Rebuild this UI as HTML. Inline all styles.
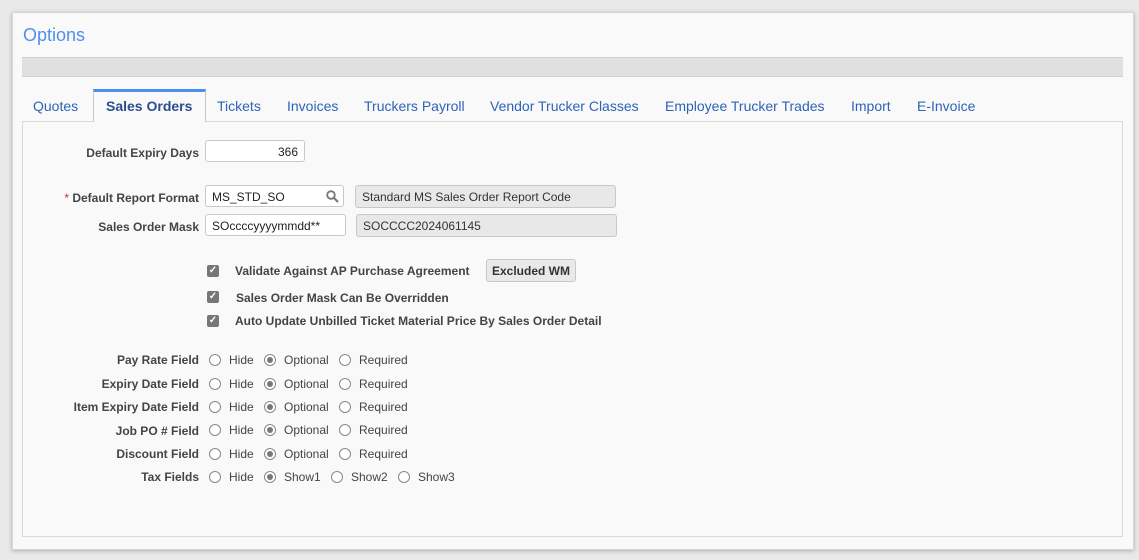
<!DOCTYPE html>
<html><head><style>
body{margin:0;width:1139px;height:560px;background:#e9e9e9;font-family:"Liberation Sans",sans-serif;position:relative;overflow:hidden}
.a{position:absolute;white-space:nowrap}
#panel{left:12px;top:12px;width:1120px;height:536px;background:#f9f9f9;border:1px solid #d6d6d6;box-shadow:0 1px 4px rgba(0,0,0,.25)}
.lbl{font-size:12px;font-weight:bold;color:#444;text-align:right;width:199px;left:0}
.tab{font-size:14px;color:#2e63b8;top:98px}
.inp{background:#fff;border:1px solid #c8c8c8;border-radius:3px;height:22px;font-size:12px;color:#222;line-height:22px;padding:0 6px;box-sizing:border-box}
.ro{background:#e8e8e8;border:1px solid #c8c8c8;border-radius:3px;height:23px;font-size:12px;color:#333;line-height:22px;padding:0 6px;box-sizing:border-box}
.cb{width:12px;height:12px;background:#777;border-radius:2px;color:#fff;font-size:10px;line-height:12px;text-align:center;font-weight:bold}
.ct{font-size:12px;font-weight:bold;color:#444}
.r{width:12px;height:12px;border:1px solid #888;border-radius:50%;box-sizing:border-box;background:#fff}
.r.on::after{content:"";position:absolute;left:2px;top:2px;width:6px;height:6px;border-radius:50%;background:#777}
.rt{font-size:12px;color:#444}
</style></head><body>
<div class="a" id="panel"></div>
<div class="a" style="left:23px;top:25px;font-size:18px;color:#4f8ff0">Options</div>
<div class="a" style="left:22px;top:57px;width:1101px;height:20px;background:#e0e0e0;border-top:1px solid #cfcfcf;border-bottom:1px solid #cfcfcf;box-sizing:border-box"></div>
<div class="a" style="left:22px;top:121px;width:1101px;height:416px;border:1px solid #d9d9d9;box-sizing:border-box;background:#f9f9f9"></div>
<div class="a" style="left:93px;top:89px;width:113px;height:33px;border:1px solid #c8c8c8;border-top:3px solid #4a8ef0;border-bottom:none;background:#f9f9f9;box-sizing:border-box"></div>
<div class="a tab" style="left:33px">Quotes</div>
<div class="a tab" style="left:106px;font-weight:bold;color:#2a4f8c">Sales Orders</div>
<div class="a tab" style="left:217px">Tickets</div>
<div class="a tab" style="left:287px">Invoices</div>
<div class="a tab" style="left:364px">Truckers Payroll</div>
<div class="a tab" style="left:490px">Vendor Trucker Classes</div>
<div class="a tab" style="left:665px">Employee Trucker Trades</div>
<div class="a tab" style="left:851px">Import</div>
<div class="a tab" style="left:917px">E-Invoice</div>

<div class="a lbl" style="top:146px">Default Expiry Days</div>
<div class="a inp" style="left:205px;top:140px;width:100px;text-align:right">366</div>
<div class="a lbl" style="top:191px"><span style="color:#c33;font-weight:normal">*</span> Default Report Format</div>
<div class="a inp" style="left:205px;top:185px;width:139px">MS_STD_SO<svg class="a" style="right:4px;top:4px" width="13" height="13" viewBox="0 0 13 13"><circle cx="5" cy="5" r="3.8" fill="none" stroke="#777" stroke-width="1.8"/><path d="M8 8l4 4" stroke="#777" stroke-width="2.2"/></svg></div>
<div class="a ro" style="left:355px;top:185px;width:261px">Standard MS Sales Order Report Code</div>
<div class="a lbl" style="top:220px">Sales Order Mask</div>
<div class="a inp" style="left:205px;top:214px;width:141px">SOccccyyyymmdd**</div>
<div class="a ro" style="left:356px;top:214px;width:261px">SOCCCC2024061145</div>

<div class="a cb" style="left:207px;top:265px">✓</div><div class="a ct" style="left:235px;top:264px">Validate Against AP Purchase Agreement</div>
<div class="a ro" style="left:486px;top:259px;width:90px;padding:0;font-weight:bold;color:#333;background:#e9e9e9;text-align:center">Excluded WM</div>
<div class="a cb" style="left:207px;top:291px">✓</div><div class="a ct" style="left:236px;top:291px">Sales Order Mask Can Be Overridden</div>
<div class="a cb" style="left:207px;top:315px">✓</div><div class="a ct" style="left:235px;top:314px">Auto Update Unbilled Ticket Material Price By Sales Order Detail</div>

<div class="a lbl" style="top:353px">Pay Rate Field</div>
<div class="a lbl" style="top:377px">Expiry Date Field</div>
<div class="a lbl" style="top:400px">Item Expiry Date Field</div>
<div class="a lbl" style="top:424px">Job PO # Field</div>
<div class="a lbl" style="top:447px">Discount Field</div>
<div class="a lbl" style="top:470px">Tax Fields</div>

<div class="a" style="left:209px;top:354px">
<div class="a r" style="left:0;top:0"></div><div class="a rt" style="left:20px;top:-1px">Hide</div>
<div class="a r on" style="left:55px;top:0"></div><div class="a rt" style="left:75px;top:-1px">Optional</div>
<div class="a r" style="left:130px;top:0"></div><div class="a rt" style="left:150px;top:-1px">Required</div>
</div>
<div class="a" style="left:209px;top:378px">
<div class="a r" style="left:0;top:0"></div><div class="a rt" style="left:20px;top:-1px">Hide</div>
<div class="a r on" style="left:55px;top:0"></div><div class="a rt" style="left:75px;top:-1px">Optional</div>
<div class="a r" style="left:130px;top:0"></div><div class="a rt" style="left:150px;top:-1px">Required</div>
</div>
<div class="a" style="left:209px;top:401px">
<div class="a r" style="left:0;top:0"></div><div class="a rt" style="left:20px;top:-1px">Hide</div>
<div class="a r on" style="left:55px;top:0"></div><div class="a rt" style="left:75px;top:-1px">Optional</div>
<div class="a r" style="left:130px;top:0"></div><div class="a rt" style="left:150px;top:-1px">Required</div>
</div>
<div class="a" style="left:209px;top:424px">
<div class="a r" style="left:0;top:0"></div><div class="a rt" style="left:20px;top:-1px">Hide</div>
<div class="a r on" style="left:55px;top:0"></div><div class="a rt" style="left:75px;top:-1px">Optional</div>
<div class="a r" style="left:130px;top:0"></div><div class="a rt" style="left:150px;top:-1px">Required</div>
</div>
<div class="a" style="left:209px;top:448px">
<div class="a r" style="left:0;top:0"></div><div class="a rt" style="left:20px;top:-1px">Hide</div>
<div class="a r on" style="left:55px;top:0"></div><div class="a rt" style="left:75px;top:-1px">Optional</div>
<div class="a r" style="left:130px;top:0"></div><div class="a rt" style="left:150px;top:-1px">Required</div>
</div>
<div class="a" style="left:209px;top:471px">
<div class="a r" style="left:0;top:0"></div><div class="a rt" style="left:20px;top:-1px">Hide</div>
<div class="a r on" style="left:55px;top:0"></div><div class="a rt" style="left:75px;top:-1px">Show1</div>
<div class="a r" style="left:122px;top:0"></div><div class="a rt" style="left:142px;top:-1px">Show2</div>
<div class="a r" style="left:189px;top:0"></div><div class="a rt" style="left:209px;top:-1px">Show3</div>
</div>
</body></html>
